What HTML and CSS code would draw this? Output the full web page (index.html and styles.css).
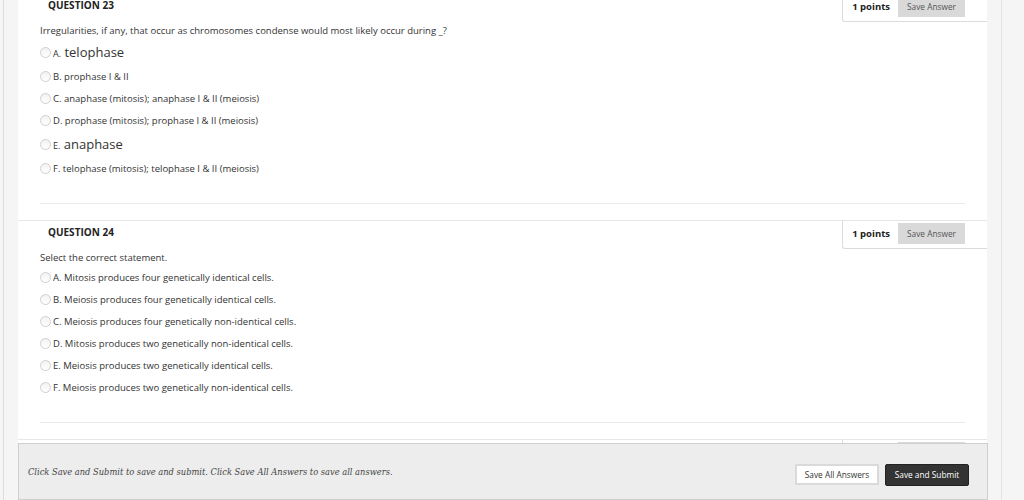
FILE: index.html
```html
<!DOCTYPE html>
<html lang="en">
<head>
  <meta charset="UTF-8">
  <meta name="viewport" content="width=device-width, initial-scale=1.0">
  <title>Test</title>
  <link rel="stylesheet" href="styles.css">
</head>
<body>
  <div class="frame">
    <div class="content">

      <section class="question first">
        <div class="q-head">
          <h2 class="q-title">QUESTION 23</h2>
          <div class="points">
            <span class="points-label">1 points</span>
            <button class="btn-save">Save Answer</button>
          </div>
        </div>
        <div class="q-body">
          <p class="q-text">Irregularities, if any, that occur as chromosomes condense would most likely occur during _?</p>
          <ul class="options">
            <li class="option big"><input type="radio" name="q23"><label><span class="letter">A.</span> telophase</label></li>
            <li class="option"><input type="radio" name="q23"><label>B. prophase I &amp; II</label></li>
            <li class="option"><input type="radio" name="q23"><label>C. anaphase (mitosis); anaphase I &amp; II (meiosis)</label></li>
            <li class="option"><input type="radio" name="q23"><label>D. prophase (mitosis); prophase I &amp; II (meiosis)</label></li>
            <li class="option big"><input type="radio" name="q23"><label><span class="letter">E.</span> anaphase</label></li>
            <li class="option"><input type="radio" name="q23"><label>F. telophase (mitosis); telophase I &amp; II (meiosis)</label></li>
          </ul>
        </div>
      </section>

      <section class="question">
        <div class="q-head">
          <h2 class="q-title">QUESTION 24</h2>
          <div class="points">
            <span class="points-label">1 points</span>
            <button class="btn-save">Save Answer</button>
          </div>
        </div>
        <div class="q-body">
          <p class="q-text">Select the correct statement.</p>
          <ul class="options">
            <li class="option"><input type="radio" name="q24"><label>A. Mitosis produces four genetically identical cells.</label></li>
            <li class="option"><input type="radio" name="q24"><label>B. Meiosis produces four genetically identical cells.</label></li>
            <li class="option"><input type="radio" name="q24"><label>C. Meiosis produces four genetically non-identical cells.</label></li>
            <li class="option"><input type="radio" name="q24"><label>D. Mitosis produces two genetically non-identical cells.</label></li>
            <li class="option"><input type="radio" name="q24"><label>E. Meiosis produces two genetically identical cells.</label></li>
            <li class="option"><input type="radio" name="q24"><label>F. Meiosis produces two genetically non-identical cells.</label></li>
          </ul>
        </div>
      </section>

      <section class="question">
        <div class="q-head">
          <h2 class="q-title">QUESTION 25</h2>
          <div class="points">
            <span class="points-label">1 points</span>
            <button class="btn-save">Save Answer</button>
          </div>
        </div>
      </section>

    </div>
  </div>

  <div class="submit-bar">
    <p class="submit-note">Click Save and Submit to save and submit. Click Save All Answers to save all answers.</p>
    <div class="submit-actions">
      <button class="btn-all">Save All Answers</button>
      <button class="btn-submit">Save and Submit</button>
    </div>
  </div>
</body>
</html>
```

FILE: styles.css
```css
* {
  box-sizing: border-box;
}
body {
  margin: 0;
  background-color: #f5f5f5;
  font-family: "Open Sans", Arial, sans-serif;
  color: #333;
}
.frame {
  margin-left: 3px;
  width: 999px;
  padding: 0 14px;
  border-left: 1px solid #dedede;
  border-right: 1px solid #e4e4e4;
}
.content {
  background-color: #fff;
  padding-bottom: 80px;
}
.question {
  border-top: 1px solid #e6e6e6;
}
.question.first {
  border-top: none;
  margin-top: -6px;
}
.q-head {
  display: flex;
  justify-content: space-between;
  height: 28px;
}
.q-title {
  margin: 0;
  padding: 4px 0 0 30px;
  font-size: 10px;
  line-height: 14px;
  font-weight: 700;
  color: #222;
}
.points {
  display: flex;
  align-items: center;
  gap: 8px;
  padding: 2px 22px 4px 9px;
  border-left: 1px solid #dcdcdc;
  border-bottom: 1px solid #dcdcdc;
  border-bottom-left-radius: 3px;
}
.points-label {
  font-size: 9.5px;
  font-weight: 700;
  color: #222;
}
.btn-save {
  width: 67px;
  height: 21px;
  border: none;
  background-color: #d9d9d9;
  font-family: "Open Sans", Arial, sans-serif;
  font-size: 8.3px;
  color: #555;
  padding: 0;
}
.q-body {
  margin: 0 22px 16px;
  padding: 1px 0 24px;
  border-bottom: 1px solid #ebebeb;
}
.q-text {
  margin: 0;
  font-size: 9.5px;
  line-height: 16px;
}
.options {
  list-style: none;
  margin: 0;
  padding: 0;
}
.option {
  display: flex;
  align-items: center;
  height: 22px;
  font-size: 9.5px;
}
.option.big {
  height: 26px;
  font-size: 13px;
}
.option .letter {
  font-size: 9px;
}
.option input {
  appearance: none;
  -webkit-appearance: none;
  width: 11px;
  height: 11px;
  margin: 0 2px 0 0;
  border: 1px solid #d0d0d0;
  border-radius: 50%;
  background: linear-gradient(#f2f2f2, #fff);
}
.submit-bar {
  position: fixed;
  left: 18px;
  bottom: 0;
  width: 970px;
  height: 57px;
  display: flex;
  align-items: center;
  justify-content: space-between;
  padding: 0 18px 0 9px;
  background-color: #ededed;
  border: 1px solid #cfcfcf;
}
.submit-note {
  margin: 0;
  font-family: "DejaVu Serif", serif;
  font-style: italic;
  font-size: 8.3px;
  color: #444;
}
.submit-actions {
  display: flex;
  gap: 6px;
  margin-top: 6px;
}
.btn-all,
.btn-submit {
  width: 84px;
  height: 21px;
  padding: 0;
  font-family: "Open Sans", Arial, sans-serif;
  font-size: 8.3px;
}
.btn-all {
  background-color: #fff;
  border: 2px solid #dadada;
  color: #333;
}
.btn-submit {
  height: 22px;
  background-color: #333;
  border: 1px solid #222;
  border-radius: 2px;
  color: #fff;
}
```
